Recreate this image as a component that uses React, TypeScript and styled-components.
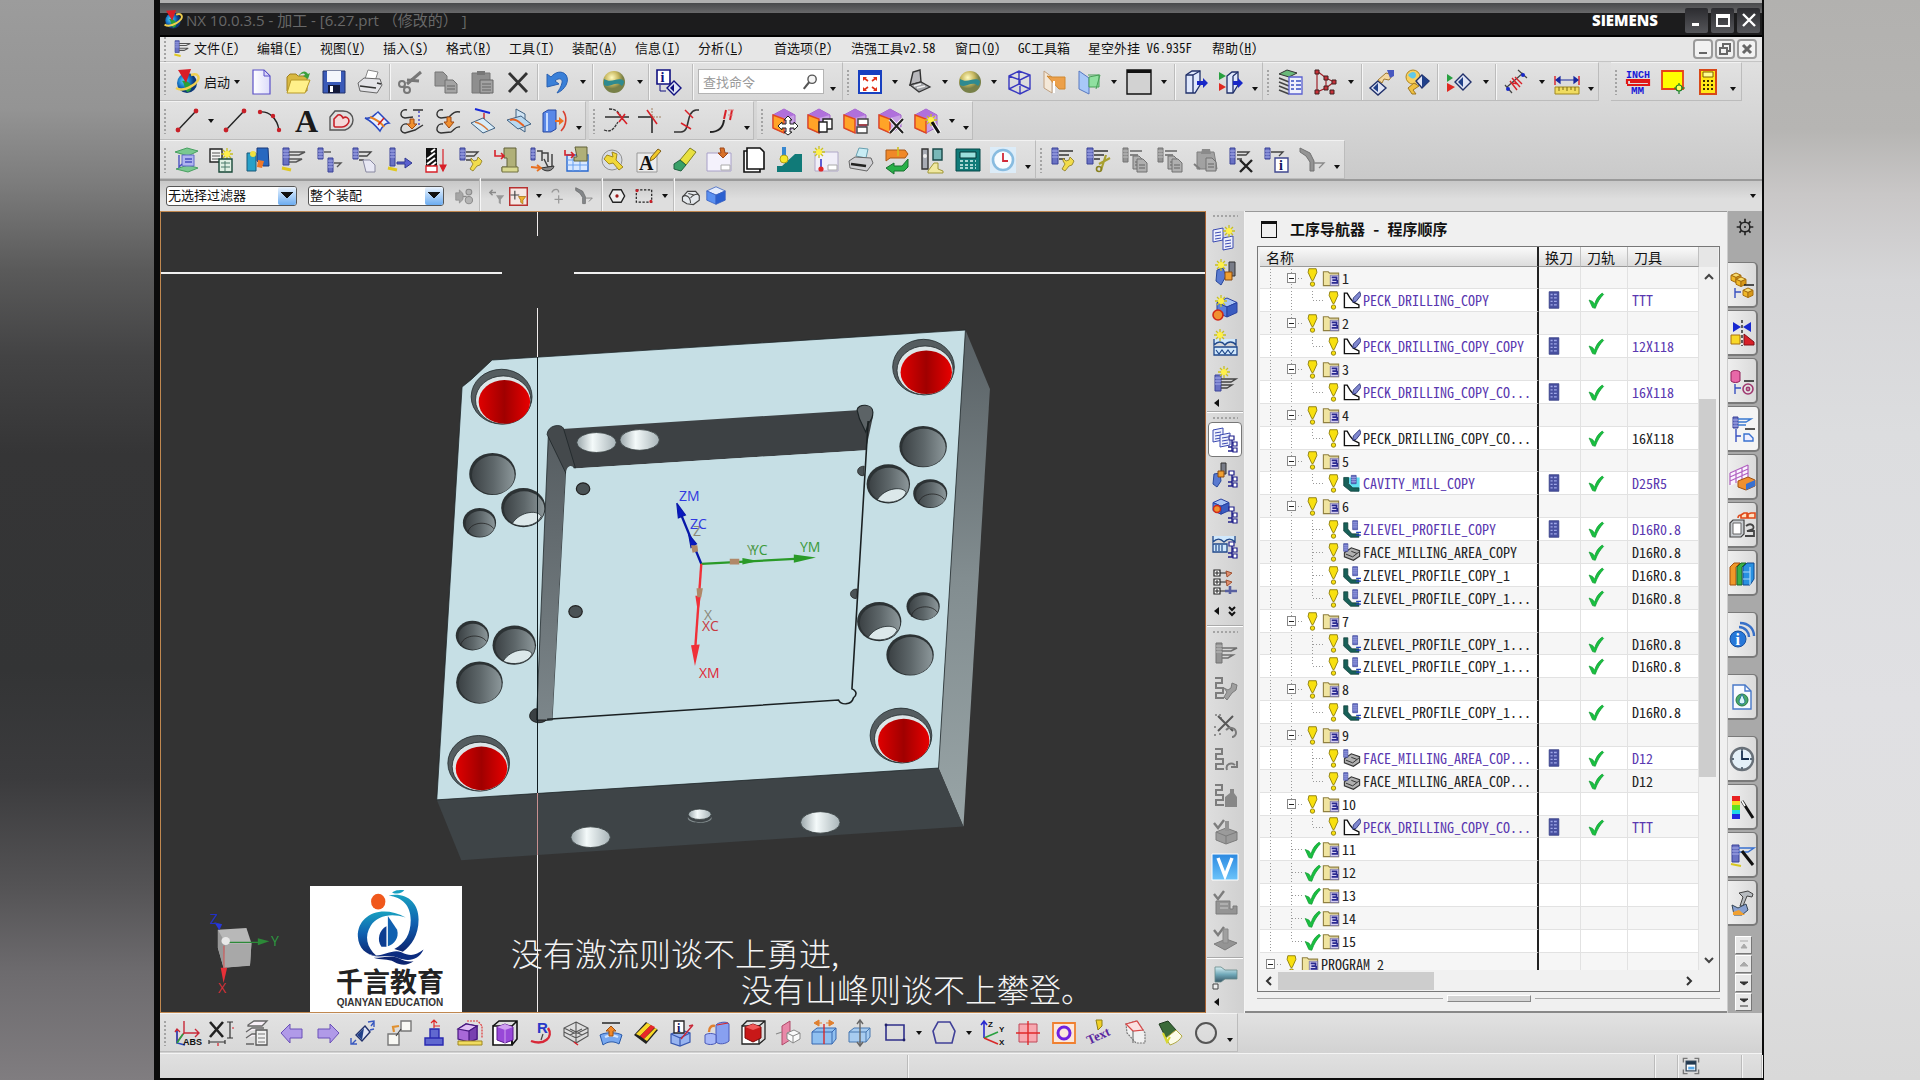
import React from 'react';
import styled, { createGlobalStyle, css } from 'styled-components';

const ui = '"Noto Sans Mono CJK SC", "Noto Sans CJK SC", sans-serif';

const Global = createGlobalStyle`
  * { box-sizing: border-box; }
  html, body { margin: 0; height: 100%; background: #333; }
  body { font: 13px/18px ${ui}; color: #111; overflow: hidden; }
  button, select, input { font: inherit; color: inherit; margin: 0; padding: 0; border: 0; background: none; }
  button svg { overflow: visible; }
`;

/* ---------- icon drawing ---------- */

type Shape = (string | number)[];
const c = (x: number, y: number, r: number) => `M${x - r} ${y}a${r} ${r} 0 1 0 ${2 * r} 0a${r} ${r} 0 1 0 ${-2 * r} 0z`;
const b = (x: number, y: number, w: number, h: number) => `M${x} ${y}h${w}v${h}h${-w}z`;
const star = (x: number, y: number): Shape[] => [
  [`M${x} ${y - 6}v12M${x - 6} ${y}h12M${x - 4} ${y - 4}l8 8M${x + 4} ${y - 4}l-8 8`, 'none', '#c8c020', 1.3],
  [c(x, y, 3), '#fff04a', 'none'],
];
const cube = (x: number, y: number, s: number, top: string, left: string, right: string, line = 'none'): Shape[] => [
  [`M${x} ${y}l${s} ${s * 0.45}l${-s} ${s * 0.45}l${-s} ${-s * 0.45}z`, top, line],
  [`M${x - s} ${y + s * 0.45}l${s} ${s * 0.45}v${s}l${-s} ${-s * 0.45}z`, left, line],
  [`M${x + s} ${y + s * 0.45}l${-s} ${s * 0.45}v${s}l${s} ${-s * 0.45}z`, right, line],
];
const drill = (x: number, y: number, h: number, w = 6): Shape[] => [
  [b(x, y, w, h), '#6a72c4', '#3a4298', 1],
  [`M${x} ${y + 3}h${w}M${x} ${y + 6}h${w}M${x} ${y + 9}h${w}`, 'none', '#a8aeea', 1],
];
const feed = (x: number, y: number): Shape[] => [[`M${x} ${y}h12l-4 4h-8M${x} ${y + 8}h5`, 'none', '#444', 1.3]];
const wrench = (x: number, y: number): Shape[] => [
  [`M${x} ${y}l3 3l3-1l1-3l4 4l-2 4l-3 1l-4 5l-3-2l3-5l-2-3z`, '#f2dc4c', '#8a7a20', 0.8],
];
const cross = (x: number, y: number, s: number): Shape[] => [[`M${x} ${y}l${s} ${s}M${x + s} ${y}l${-s} ${s}`, 'none', '#222', 2]];
const page = (x: number, y: number): Shape[] => [
  [`M${x} ${y}h6l4 4v9h-10z`, '#9c9ca0', '#444', 1],
  [`M${x + 2} ${y + 6}h6M${x + 2} ${y + 9}h6`, 'none', '#333', 1],
];
const nodes: Shape[] = [
  ['M20 13v11M20 16h3M16 20h4M20 24h3M16 24h4', 'none', '#20208a', 1.4],
  [b(17, 9, 5, 4) + b(21, 15, 4, 4) + b(21, 21, 4, 4), '#fff', '#20208a', 1.2],
];
const globe: Shape[] = [[c(13, 13, 11), 'url(#gGlobe)'], ['M3 10c8 5 14-3 20 2c0 2-1 4-2 5c-6-6-12 3-18-1z', '#2e8a90']];
const sheet = (x: number, y: number): Shape[] => [
  [`M${x} ${y}l10-2v12l-10 2z`, '#eef0fc', '#3a4ab0', 1],
  [`M${x + 2} ${y + 3}l6-1M${x + 2} ${y + 6}l6-1M${x + 2} ${y + 9}l6-1`, 'none', '#3a4ab0', 1],
];
const asm = (extra: Shape[]): Shape[] => [
  ['M1 7l11-6l11 6v12l-11 6l-11-5z', '#c8a0e4', '#a060c8', 1],
  ['M1 7l11-6l11 6l-11 3z', '#b070dc'],
  ['M1 7l11 4v14l-11-5z', '#ffa428', '#e04820', 1.4],
  ...extra,
];
const holderA: Shape[] = [['M5 10l6-2l3 8l-5 9l-5-4z', '#5a7ad0', '#28489a', 1], ['M17 2h6v14h-6z', '#787c88', '#333', 1], [b(13, 12, 7, 8), '#f0a030', '#8a4a10', 1]];
const zig: Shape[] = [['M3 2h7v5h-6v5h7v5h-7v5h8', 'none', '#555', 2]];

const icons: Record<string, Shape[]> = {
  nx: [[c(13, 14, 10), 'url(#gSea)'], ['M8 12c3 3 2 7 5 11c4 0 5-4 4-7c-2-3-5-5-9-4z', '#28a03c'], ['M4 1l13-1l-5 14z', '#d81e28'], ['M2 19c8 5 26-6 22-12c-1-2-4-2-7-1', 'none', '#f0d050', 2.4]],
  new: [['M4 1h11l6 6v18h-17z', 'url(#gPaper)', '#5a50c8', 1.2], ['M15 1v6h6z', '#d8d4f8', '#5a50c8']],
  open: [['M2 8l3-3h6l2 2h9v15h-20z', '#d8b840', '#a08020'], ['M6 11h19l-5 13h-18z', '#fff08a', '#b89a28'], ['M14 6c4-5 7-4 9-1l2-1l-2 6l-5-3l2-1c-1-2-3-2-6 1z', '#3ca03c']],
  save: [[b(2, 2, 22, 22), '#3a5ab8', '#20306a'], [b(6, 2, 14, 11), '#f4f6fc'], [b(7, 16, 12, 8), '#141a3a'], [b(9, 17, 3, 6), '#fff']],
  print: [['M8 10l3-9l10 2l-3 9z', '#fff', '#888'], ['M1 14l6-5l16 1l2 6l-5 8l-17-2z', '#e4e4e8', '#666'], ['M3 17l16 2M20 14l4 1', 'none', '#333', 1.6]],
  cut: [['M24 3l-14 12M22 12l-12-1', 'none', '#777', 3], [c(5, 15, 3) + c(10, 21, 3), 'none', '#777', 2]],
  copy: [['M2 3h8l4 4v10h-12z', '#999', '#777'], ['M12 11h8l4 4v9h-12z', '#a4a4a4', '#707070'], ['M14 17h8M14 20h8', 'none', '#666', 1]],
  paste: [[b(3, 4, 18, 20), '#8e8e8e', '#777'], [b(8, 2, 8, 4), '#777'], [b(11, 11, 13, 13), '#a2a2a2', '#666'], ['M13 15h9M13 18h9M13 21h9', 'none', '#666', 1]],
  del: [['M4 4l18 19M22 4l-18 19', 'none', '#333', 2.8]],
  undo: [['M2 5v13l12-3l-4-3c4-4 8-2 7 2s-3 7-5 10c8-3 13-12 9-18c-4-5-11-3-15 2z', '#3a80d8', '#2a60b0']],
  globe,
  info: [[b(1, 1, 13, 14), '#fff', '#101080', 1.6], ['t', 4.5, 13, 14, 'i', '#101080', 700, 'Liberation Serif'], ['M18 12l7 7l-7 7l-7-7z', '#dfe4f4', '#101080', 1.4], ['M18 15v8l-4-4z', '#101080'], ['M4 16v6h6', 'none', '#101080', 1]],
  fit: [[b(2, 2, 22, 22), '#fff', '#1840c0', 2], [b(2, 2, 22, 4), '#1840c0'], ['M7 9l4 3M19 9l-4 3M7 21l4-3M19 21l-4-3', 'none', '#e03018', 1.6], ['M6 8h4l-4 4zM20 8v4l-4-4zM6 22v-4l4 4zM20 22h-4l4-4z', '#e03018']],
  laptop: [['M3 16l3-13l7-2l1 12z', '#b8b8bc', '#333', 1.4], ['M3 16l11-3l9 5l-11 5z', '#a0a2a6', '#333', 1.2], ['M7 17l7-2M10 19l8-2', 'none', '#eee', 1.4]],
  wire: [['M3 7l10-5l11 4v14l-10 5l-11-5zM3 7l11 4l10-5M14 11v14M13 2v13l-10 5M13 15l11 5', 'none', '#3838c0', 1.4]],
  clipA: [['M3 2l8 6v16l-8-5z', '#f4e8d8', '#c0a080'], ['M11 8h13v12h-6l-12-13z', '#eca04a', '#d08830'], ['M13 12v12', 'none', '#fff', 2]],
  clipB: [['M3 2l10 7v16l-10-5z', '#a8c8f8', '#5878c0'], ['M13 8l10-2v12h-10z', '#90e0a0', '#48a058'], ['M12 6l12 0M24 6l-4 14', 'none', '#48a058', 1]],
  pane: [[b(1, 1, 24, 24), '#d2d2d2', '#111', 1.4], [b(1, 1, 24, 3), '#111']],
  outA: [['M3 6l6-4h8v14l-5 8h-9z', '#dfe8fc', '#20306a', 1.3], ['M10 6l7-4M10 6v18M3 6h7', 'none', '#20306a', 1.3], ['M14 12h6v-3l5 5l-5 5v-3h-6z', '#1828c8']],
  outB: [['M9 7l5-4h6v13l-5 8h-6z', '#dfe8fc', '#20306a', 1.3], ['M15 7l5-4M15 7v17', 'none', '#20306a', 1.3], ['M1 3l7 4l-7 4z', '#28a040'], ['M1 14l7 4l-7 4z', '#e02820'], ['M15 12h5v-3l5 5l-5 5v-3h-5z', '#1828c8']],
  layers: [['M2 5l8-4l10 3l-8 4z', '#6ab87a', '#333'], ['M2 9l10 4M2 13l10 4M2 17l10 4M2 21l10 4', 'none', '#444', 1.5], [b(12, 8, 13, 17), '#eef0fc', '#5a60d0', 1.3], ['M14 12h3M14 16h3M14 20h3M19 12h5M19 16h5M19 20h5', 'none', '#3a50c0', 1.6]],
  graph: [['M5 2l9 7l8 4l-8 6l-9 4z M5 2v21M14 9v10', 'none', '#a02028', 1.2], [b(3, 1, 4, 4) + b(12, 7, 4, 4) + b(20, 11, 4, 4) + b(12, 17, 4, 4) + b(3, 21, 4, 4) + b(18, 21, 4, 4), '#c83038', '#402020']],
  pick: [['M9 12l8 7l-8 7l-8-7z', '#dfe4f4', '#20306a', 1.4], ['M9 14v9l-5-4z', '#20408a'], ['M9 11l8-7l7 2l-4 5l-5-1l-2 4z', '#f4d8a0', '#a07830'], ['M18 1h7v6l-4 2z', '#4858c0']],
  man: [[c(9, 8, 7), '#f8d060', '#b08820'], ['M4 6c3-4 8-4 8 0s-5 5-8 0z', '#60c8e8'], ['M10 14l5 3l-6 4l3 4l-4 0l-4-6z', '#f0c040', '#a07820'], ['M18 6l7 6l-7 7l-6-7z', '#dfe4f4', '#20306a', 1.4], ['M18 6l7 6l-7 7z', '#20408a']],
  tri: [['M1 5l6 4l-6 4z', '#28a040'], ['M1 14l8 4l-8 5z', '#e02820'], ['M17 5l8 8l-8 8l-8-8z', '#dfe4f4', '#20306a', 1.4], ['M17 8v10l-5-5z', '#20408a']],
  spring: [['M4 18L20 4M2 16l7 8M15 1l9 8', 'none', '#444', 1.2], ['M7 12l7 9M9 9l8 9M12 8l7 7M10 14l5 1', 'none', '#d82028', 1.4], [c(5, 20, 2) + c(20, 6, 2), '#1828c8']],
  measure: [['M1 7v9M25 7v9', 'none', '#d82028', 1.4], ['M3 11h20M2 11l4-3v6zM24 11l-4-3v6z', '#1828a0', '#1828a0', 1.2], [b(1, 18, 24, 7), '#f0dc60', '#a08820'], ['M5 18v4M9 18v3M13 18v4M17 18v3M21 18v4', 'none', '#7a6a10', 1]],
  inch: [['t', 1, 9, 10, 'INCH', '#1818d8', 700, 'Liberation Mono'], ['M2 15v-4h22v2h-19M24 12v4h-22', 'none', '#e01818', 2.2], ['t', 6, 25, 11, 'MM', '#1818d8', 700, 'Liberation Mono']],
  note: [[b(2, 2, 21, 18), '#ffff00', '#e84018', 1.8], ['M19 14v11M14 19h11', 'none', '#188028', 1.2], [c(19, 19, 3), '#ffff60', '#188028', 1.2]],
  calc: [[b(5, 1, 16, 24), '#ffe818', '#d84818', 2], [b(8, 3, 10, 5), '#ffff90', '#806000'], ['M8 12h10M8 16h10M8 20h10', 'none', '#403000', 2.2, '2 2']],
  line: [['M4 22L22 3', 'none', '#222', 1.4], [c(4, 22, 2.4) + c(22, 3, 2.4), '#c82028']],
  arc: [['M3 4c9-1 17 6 19 18', 'none', '#222', 1.4], [c(3, 4, 2.2) + c(16, 8, 2.2) + c(22, 22, 2.2), '#c82028']],
  A: [['t', 2, 24, 32, 'A', '#1a1a1a', 700, 'Liberation Serif']],
  region: [['M2 21v-12l5-6h8c6 0 10 4 10 9s-4 9-8 10h-15z', 'none', '#555', 1.4], ['M6 18v-7l4-4c3-1 4 1 5 3c3-2 6 0 6 3s-4 6-7 6h-7z', '#f4d8d8', '#c82028', 1.6]],
  patch: [['M1 10c7 1 9-3 13-6l11 11c-4 0-7 4-9 8c-4-5-9-10-15-13z', '#e8f0ff', '#2848c0', 1.5], ['M6 9c5 2 11 5 14 10', 'none', '#e88020', 2], ['M14 17l6-7', 'none', '#d02020', 1.5]],
  proj: [['M8 2c-6-2-9 7-2 8l8-1M14 2h10M8 16c-6-1-9 8-2 9l10-3l8-5', 'none', '#333', 1.4], ['M11 11h4v5h3l-5 5l-5-5h3z', '#f09030', '#a04810'], ['M20 3v14', 'none', '#2828c0', 1.2, '2 2']],
  join: [['M8 2c-6-2-9 7-2 8l8-1c4-4 6-6 11-5M8 16c-6-1-9 8-2 9l10-1c4-3 5-6 9-5', 'none', '#333', 1.4], ['M12 9h4v5h3l-5 6l-5-6h3z', '#f09030', '#a04810']],
  tosurf: [['M5 1l15 4', 'none', '#1828d8', 2], ['M14 5v6', 'none', '#c82028', 1.4], ['M1 15l12-5l12 10l-12 5z', '#d8ecf8', '#406080'], ['M5 14c5 1 9 4 13 8', 'none', '#d87838', 1.6]],
  inter: [['M10 1l9 5v18l-9-6z', '#d0e4f4', '#406080'], ['M1 12l14-4l10 8l-13 5z', '#b8d8f0', '#406080'], ['M4 12c6-2 10 3 14 6', 'none', '#e86020', 2]],
  wrap: [['M2 5l5-3h8v19l-5 3h-8z', '#5a88e8', '#2848a0'], ['M6 5v18', 'none', '#c8dcff', 2], ['M14 13h5', 'none', '#f07020', 2], ['M18 9l5 4l-5 4z', '#f07020'], ['M22 3c4 5 4 14-2 20', 'none', '#d84030', 1.6]],
  trim: [['M2 9h24', 'none', '#222', 1.4], ['M6 1c9 0 11 5 14 12M1 22c8 3 10-2 14-8', 'none', '#333', 1.3, '3 1'], ['M14 4l10 12M22 6l-6 8', 'none', '#d82028', 1.6]],
  corner: [['M1 9h14v16', 'none', '#222', 1.5], ['M15 0v8M16 9h9', 'none', '#a08060', 1, '2 1'], ['M10 2l10 14', 'none', '#d82028', 1.6]],
  scurve: [['M1 24h7c10 0 4-20 15-22h3', 'none', '#333', 1.6], ['M12 2l8 8M8 15l10 6', 'none', '#d82028', 1.5]],
  offset: [['M1 24c9 0 13-4 14-12', 'none', '#222', 2], ['M15 11l2-9M21 12l2-10', 'none', '#d82028', 2], ['M19 2h6M19 7h5', 'none', '#e08080', 1]],
  asmMove: asm([['M16 8l4 4h-2v4h4v-2l4 4l-4 4v-2h-4v4h2l-4 3l-4-3h2v-4h-4v2l-4-4l4-4v2h4v-4h-2z', '#fff', '#222', 1]]),
  asmCopy: asm([['M12 14h8v10h-8zM16 11h9v10h-5v-7h-4z', '#fff', '#222', 1.4]]),
  asmSwap: asm([['M15 11h10v6h-10zM14 19h10v6h-10z', '#fff', '#444', 1.4], ['M16 17l8 0', 'none', '#d82028', 1]]),
  asmDel: asm([['M12 11l13 14M25 11l-13 14', 'none', '#fff', 4], ['M12 11l13 14M25 11l-13 14', 'none', '#222', 2.2]]),
  asmWand: asm([['M18 14l7 11', 'none', '#fff', 5], ...star(17, 12), ['M18 14l7 11', 'none', '#111', 3]]),
  update: [['M1 5l12-4l11 3l-10 5zM2 22l12-4l10 3l-10 4z', '#7ac890', '#48a060'], [b(8, 8, 12, 11), '#b0b4f0', '#6068c8'], ['M5 8v12l3-3M11 12h7M11 15h7', 'none', '#4850c0', 1.4]],
  opNew: [[b(1, 2, 12, 13), '#f4f4f4', '#222', 1.4], ['M3 6h8M3 9h8M3 12h8', 'none', '#555', 1], ...star(18, 7), [b(10, 12, 13, 13), '#e0f0e4', '#184838', 1.4], ['M12 16h9M12 20h9M16 14v10', 'none', '#487868', 1]],
  machine: [['M2 6h9v18h-9z', '#28a0c8', '#185878'], ['M12 1h11l1 18h-6l-6-5z', '#2868c0', '#183878'], [c(8, 7, 3), '#f0e040'], ['M13 13l6 1l-2 7l-5-1z', '#f07828']],
  tool1: [...drill(3, 1, 17), ['M9 5h16l-6 3h-10M9 12h13l-6 3h-7', 'none', '#555', 1.5], ['M2 21l9 2', 'none', '#e0c820', 3]],
  tool2: [...drill(2, 1, 11, 5), ['M8 5h7', 'none', '#555', 1.4], ...drill(12, 11, 14, 5), ['M18 16h7l-4 4', 'none', '#555', 1.4]],
  tool3: [...drill(2, 1, 11, 5), ...feed(8, 5), ['M12 13h7l5 5v7h-9z', '#e8e8f4', '#8888a0']],
  tool4: [...drill(3, 1, 18, 5), ['M1 21l9 2', 'none', '#e0c820', 3], ['M10 15h8v-4l7 5l-7 5v-4h-8z', '#5a60d0', '#303890']],
  bit: [[b(4, 1, 11, 18), '#111'], ['M5 12l8-6M5 17l8-6M9 5l4-3M9 19l5-4', 'none', '#fff', 2], [b(4, 19, 11, 6), '#fff', '#d82028', 1.4], ['M21 2v18M18 18l3 6l3-6z', '#d82028', '#d82028', 1.2]],
  tool5: [...drill(2, 1, 12, 5), ...feed(8, 5), ...wrench(13, 11)],
  mill: [['M11 1h12v18l2 5h-16v-4h5v-9h-3z', '#b0b078', '#606038'], [b(9, 20, 16, 5), '#d8d890', '#707040'], ['M2 3v6h8M8 6l3 3l-3 3', 'none', '#d82028', 1.6]],
  post: [...drill(2, 1, 12, 4), ['M8 4h5v10M13 6h6v9M15 12l4 8h4v-13', 'none', '#444', 1.5], ['M12 21c5 5 12 3 13-2z', '#888', '#333'], ['M2 20l9 1M8 18l4 3l-4 3', 'none', '#e87020', 1.8]],
  sim: [[b(3, 8, 21, 16), '#d8e8ff', '#2868d0', 1.4], ['M3 13h21M3 18h21M9 8v16M16 8v16', 'none', '#68a0f0', 1], ['M11 0h12v14h-13v-4h3z', '#b0b078', '#606038'], ['M1 3v5h8M7 5l3 3l-3 3', 'none', '#d82028', 1.6]],
  gearWrench: [[c(12, 13, 10), '#d8dce4', '#909090'], ['M7 8l-3 4l5 5l4-1l6 7l4-3l-7-7l1-6l-5-2l1 5z', '#f0d838', '#a08820']],
  note2: [[b(2, 6, 20, 19), '#ececec', '#999'], ['t', 4, 23, 20, 'A', '#111', 700, 'Liberation Serif'], ['M16 10l7-8l3 2l-7 8l-4 2z', '#f0c828', '#806018']],
  eraser: [['M9 13L19 1l6 4l-10 13z', '#e8e040', '#808020'], ['M9 13l6 5l-5 6l-7-2l0-5z', '#38a068', '#206040']],
  cardIn: [[b(1, 6, 24, 18), '#f4f2fc', '#a8a0c8'], [b(15, 18, 9, 5), '#fff', '#aaa'], ['M14 1l4 0l1 5l3 0l-5 5l-5-5h3z', '#d87028', '#a04818']],
  pages: [[b(2, 4, 16, 21), '#fff', '#111', 1.6], ['M5 1h13l4 4v17h-17z', '#fff', '#111', 1.6]],
  slope: [['M0 25v-6h5l13-12h7v18z', '#107a78'], [b(5, 0, 4, 9), '#3888d0'], [c(7, 12, 4), '#f8e828', '#b0a018']],
  cardStar: [[b(2, 5, 23, 19), '#f0eef8', '#b0a8c8'], ...star(6, 5), ['M8 12v8', 'none', '#3838c8', 1.6], [c(8, 22, 2.6), '#e02828'], [b(15, 18, 9, 5), '#fff', '#aaa']],
  print2: [['M8 9l3-8l9 1l-2 9z', '#c8ecf4', '#68a0b0'], ['M1 14l6-4l16 1l2 5l-6 8l-17-3z', '#d0d0d4', '#666'], ['M3 17l15 2', 'none', '#222', 2.6]],
  loop: [['M2 3h19l3 4l-3 4h-15l-4 3z', '#f08828', '#a85818'], ['M24 12v8l-4 4h-10v3l-8-6l8-5v3h8z', '#28b048', '#187030'], ['M14 0v9', 'none', '#d0c020', 1.6]],
  flask: [[b(3, 2, 6, 20), '#a8acb4', '#333', 1.4], [c(6, 9, 2), '#eee'], [b(14, 2, 9, 11), '#78b8b8', '#184848', 1.4], ['M9 24l6-8h4v6l5 2v2h-15z', '#f0e8a0', '#a09838']],
  teal: [[b(1, 2, 24, 22), '#107a78', '#064848'], [b(5, 5, 16, 6), '#9ae0dc', '#043838'], ['M5 14h16M5 18h16M5 21h16', 'none', '#d8f4f0', 1.6, '3 2']],
  clock: [[b(0, 0, 26, 26), '#dcecf8'], [c(13, 13, 10), '#f8fcff', '#88bce0', 2.6], ['M13 6v8h5', 'none', '#d02838', 1.8]],
  toolW: [...drill(1, 1, 16, 6), ['M8 4h14M8 8h10M8 12h6', 'none', '#333', 1.4], ...wrench(12, 11)],
  toolC: [...drill(1, 1, 16, 6), ['M8 4h14M8 8h10M8 12h6', 'none', '#333', 1.4], ['M24 11l-11 6M20 8l-5 15', 'none', '#a8a030', 2.2], [c(13, 22, 2.5), 'none', '#888020', 1.6]],
  toolP: [...drill(1, 1, 14, 5), ['M8 4h12M8 8h8', 'none', '#333', 1.4], ...page(11, 9), ...page(15, 12)],
  clip: [['M4 5h17l3 17h-20z', '#888', '#555'], ['M9 2h8l1 5h-10z', '#666'], ...page(13, 11), ['M1 17l6 5', 'none', '#555', 2]],
  toolX: [...drill(2, 1, 16, 5), ['M9 5h12l-3 3h-9M9 12h5', 'none', '#444', 1.3], ['M12 13l12 12M24 13l-12 12', 'none', '#222', 2.4]],
  toolI: [...drill(1, 1, 11, 5), ['M7 5h12l-4 4', 'none', '#444', 1.3], [b(11, 11, 13, 14), '#fff', '#404890', 1.4], ['t', 15, 23, 14, 'i', '#101060', 700, 'Liberation Serif']],
  arm: [['M1 1l10 5l4 8v10h-4v-9l-4-6l-6-4z', '#707478', '#444'], ['M15 16h10l-5 5', 'none', '#666', 1.3]],
  filt: [['M8 4l-4 4l4 4M5 8h8', 'none', '#777', 2], ['M13 12h12l-5 6v7l-3-2v-5z', '#888']],
  redfilt: [[b(1, 1, 24, 24), '#f4e8e4', '#b83030', 2], ['M8 5v12M2 11h12', 'none', '#444', 1.6], ['M13 13h10l-4 5v5l-3-2v-3z', '#f0b030', '#a07010']],
  gcube: [['M1 8h5v-4l5 5v8l-5 5v-4h-5z', '#999', '#777'], [c(19, 7, 4) + c(19, 18, 5), '#aaa', '#777', 1.4], ['M11 13h5', 'none', '#777', 2]],
  mv: [['M4 8c3-6 10-6 10 0M14 12v12M8 18h12', 'none', '#888', 1.8]],
  hexdot: [['M7 4h12l5 9l-5 9h-12l-5-9z', '#eee', '#222', 2], [c(13, 13, 2.4), '#a01818']],
  dash: [[b(3, 5, 20, 16), 'none', '#222', 1.6, '3 2'], [c(4, 6, 2) + c(22, 20, 2), '#c82028']],
  soft: [['M2 14l7-8h11l5 6v6l-8 6l-9-1l-6-4z', '#e4e8ec', '#444', 1.6], ['M2 13c5-3 11 0 11 9M13 15c3-4 6-6 11-5M10 9l8 2', 'none', '#444', 1.4]],
  bluecube: cube(13, 1, 12, '#e4ecfc', '#5a90f0', '#2a60d0', '#3860c0'),
  gNote: [...sheet(1, 5), ...sheet(11, 13), ...star(17, 6)],
  gTool: [...holderA, ...star(9, 5)],
  gGeo: [...cube(15, 2, 10, '#a8c4f4', '#5a80dc', '#3a5cc0', '#2840a0'), [c(6, 19, 5), '#f09030', '#d02818', 1.6], ...star(9, 5)],
  gMethod: [['M2 8v6c4-4 8-4 11 0c3-4 8-4 11 0v-6M2 16h23v8h-23z', '#d0e8fc', '#20488a', 1.3], ['M4 19l3 4l3-4l3 4l3-4l3 4l3-4', 'none', '#20488a', 1.2], ...star(8, 4)],
  gOp: [...drill(3, 8, 16, 6), ['M9 12h15l-5 3h-10M9 18h11l-5 3h-6', 'none', '#444', 1.3], ...star(12, 5)],
  hNote: [...sheet(1, 3), ...sheet(8, 8), ...nodes],
  hTool: [['M2 12l6-1l1 8l-4 6l-4-3z', '#5a7ad0', '#28489a', 1], ['M9 1h5v11h-5z', '#787c88', '#333', 1], [b(6, 9, 6, 6), '#f0a030', '#8a4a10', 1], ...nodes],
  hGeo: [...cube(9, 1, 8, '#a8c4f4', '#5a80dc', '#3a5cc0', '#2840a0'), [c(5, 11, 3.5), '#f09030', '#d02818', 1.4], ...nodes],
  hMethod: [['M1 3v6c4-4 7-4 11 0c4-4 7-4 11 0v-6M1 11h14v8h-14z', '#d0e8fc', '#20488a', 1.3], ['M4 12v6M7 12v6M10 12v6', 'none', '#20488a', 1.2], ...nodes],
  expand: [[b(2, 1, 6, 6) + b(2, 10, 6, 6) + b(2, 19, 6, 6), '#fff', '#222', 1.2], ['M3 4h4M5 2v4M3 13h4M5 11v4M3 22h4M5 20v4M8 4h7M8 13h7M8 22h7', 'none', '#222', 1], ['M14 2l6 2l-5 4zM14 11l6 2l-5 4z', '#e09070', '#a05030'], ['M13 22h12M18 17v8', 'none', '#5860a0', 2.6]],
  dOp: [...drill(4, 2, 20, 6), ['M10 7h15l-6 3h-9M10 14h11l-5 3h-6', 'none', '#444', 1.6]],
  dZigW: [...zig, ['M12 12l4 2l3-2l1-5l5 2l-1 5l-4 3l-5 7l-3-3l3-5z', '#888', '#555']],
  dZigX: [['M3 3h6v6M3 24v-4M3 16v-4M9 22h-4', 'none', '#555', 1.6, '2 2'], ...cross(6, 4, 15), ['M14 18c4-4 10-2 10 3c0 2-2 4-4 4', 'none', '#555', 2]],
  dZigR: [...zig, ['M15 23c-2-6 4-8 8-5M25 14v6h-6', 'none', '#555', 2]],
  dZigB: [...zig, ['M13 14l5-4v-4h4v4l3 4v10h-12z', '#666']],
  dChk: [['M2 5l4 5l6-8', 'none', '#555', 2.4], ['M4 14l10-4l11 4v8l-11 4l-10-4z', '#8a8070', '#555'], ['M4 14l10 4l11-4M14 18v8', 'none', '#555', 1], [b(13, 3, 4, 10), '#777']],
  vbox: [['M0 0h26v26h-26z', 'url(#gBlue)', '#fff', 1], ['M6 4l7 18l7-18', 'none', '#fff', 3.4]],
  dChk2: [['M2 5l4 5l6-8', 'none', '#555', 2.4], ['M4 12h14v8h3v-3h4v8h-21z', '#777', '#555'], ['M8 15h8M8 19h8', 'none', '#aaa', 1.4]],
  dChk3: [['M2 5l4 5l6-8', 'none', '#555', 2.4], ['M2 19l12-5l11 4l-12 7z', '#777', '#555'], [b(11, 4, 5, 14), '#888', '#666']],
  torch: [['M3 3h6l4 3h12v9h-12l-4 3h-6z', 'url(#gTorch)', '#688', 0.8], [b(1, 20, 5, 5), '#eee', '#444', 1]],
  rAsm: [...cube(7, 1, 5, '#f8dc70', '#f0b828', '#d89818', '#a87010'), ...cube(12, 5, 5, '#f8dc70', '#f0b828', '#d89818', '#a87010'), ['M15 13h10', 'none', '#111', 1.4], ['M6 16v10M6 20h6', 'none', '#3850c0', 1.4], ...cube(19, 16, 5, '#f8dc70', '#f0b828', '#d89818', '#a87010')],
  rCon: [['M4 2l8 5l-8 5zM22 2l-8 5l8 5z', '#1828d0'], ['M13 0v26', 'none', '#222', 1.4, '3 2'], [b(2, 15, 9, 9), '#f8d828', '#a87010'], ['M15 14l10 8v3h-10z', '#d82028', '#801018']],
  rPart: [['M2 4v9c2 2 7 2 9 0v-9c-2-2-7-2-9 0z', '#e868a8', '#902058'], ['M15 13h10', 'none', '#111', 1.4], ['M6 16v10M6 20h6', 'none', '#3850c0', 1.4], [c(19, 21, 5) + c(19, 21, 1.6), 'none', '#a03870', 1.6]],
  rOp: [...drill(3, 1, 11, 5), ['M8 3h13l-5 3h-8M8 9h8', 'none', '#3878d0', 1.4], ['M15 13h10', 'none', '#111', 1.4], ['M6 13v13M6 20h5', 'none', '#3850c0', 1.4], ['M14 18h5l4 4v3h-9z', '#eef', '#3870d0', 1.4]],
  rMach: [['M1 9l18-8v12l-18 9z', '#fbf4ff'], ['M1 9l18-8M1 13l18-8M1 17l18-8M1 9v12M7 7v12M13 4v13M19 1v12', 'none', '#b060c0', 1.2], ['M9 17l10-4l7 3v6l-9 4l-8-3z', '#f09030', '#a05010'], ['M17 20l9-4v6l-9 4z', '#3870d0']],
  rRobot: [['M12 3l3-2h3v5h-6zM19 2l3-1h4v5h-7z', '#ffe0c0', '#e04818', 1.6], ['M9 6c0-3 2-3 3-2', 'none', '#e04818', 1.6], ['M1 11l3-3h11v14l-3 3h-11z', '#c8ccd0', '#444', 1.2], [b(4, 11, 8, 11), '#fff', '#666'], ['M17 14c5-4 9 0 7 3l-6 2h7v5h-9', 'none', '#444', 1.8]],
  rBooks: [['M1 7l4-4h6l-4 4v18h-6z', '#f09828', '#a05010'], ['M8 7l4-4h5l-4 4v18h-5z', '#38b048', '#186828'], ['M14 7l4-4h7v16l-4 6h-7z', '#2890e0', '#104890'], ['M14 12h7M14 19h7M21 7v18', 'none', '#a8d8f8', 1.2]],
  rInfo: [[c(9, 17, 8), '#2878d8', '#1850a0'], ['t', 6.5, 23, 16, 'i', '#fff', 700, 'Liberation Serif'], ['M10 5c6 0 10 5 10 10M11 1c9 0 14 6 14 13', 'none', '#3870c8', 2.4]],
  rDoc: [['M4 1h12l6 6v18h-18z', '#f8faff', '#4878c8', 1.4], ['M16 1v6h6', 'none', '#4878c8', 1.4], [c(13, 16, 6), '#48a868', '#287848'], ['M13 10l3 7c0 4-6 4-6 0z', '#d8f4f8', '#287898']],
  rClock: [[c(13, 13, 11), '#e4f0f8', '#687078', 2.4], ['M13 5v8h7', 'none', '#183050', 1.8], ['M13 3v2M13 21v2M3 13h2M21 13h2', 'none', '#345', 1.4]],
  rColor: [[b(3, 2, 8, 5), '#e82020'], [b(3, 7, 8, 4), '#f8d820'], [b(3, 11, 8, 5), '#60e020'], [b(3, 16, 8, 4), '#20d8e8'], [b(3, 20, 8, 5), '#2028e0'], ['M13 7l11 17', 'none', '#111', 3], ['M13 7l3 5', 'none', '#fff', 1.6]],
  rWand: [...drill(3, 3, 17, 7), ['M10 6h15l-6 4h-9', 'none', '#3870d0', 1.4], ['M13 9l11 14', 'none', '#111', 3], ['M2 22l10 2', 'none', '#d8c820', 2]],
  rTools: [['M10 3l9-2l5 3l-1 3l-5-1l-4 10h-3l3-9z', '#b8bcc0', '#444'], ['M3 15l6 3l8-4l2 6l-6 5h-8z', '#88a0d0', '#345'], ['M4 22l6-2l6 5h-12z', '#f0a030']],
  wcs: [['M10 1v12h15M21 9l4 4l-4 4M10 13l-7 9v-12M1 12l2-3l3 3', 'none', '#c82838', 1.4], ['M3 11v12l8 2', 'none', '#2848c0', 1.6], ['M9 14l-6 9', 'none', '#28a040', 1.6], ['t', 9, 25, 9, 'ABS', '#111', 700, 'Liberation Sans']],
  xdim: [['M2 2l13 15M15 2l-13 15', 'none', '#222', 2.6], ['M19 2h6M19 18h6M22 2v16M1 22h16M1 20v4M17 20v4', 'none', '#333', 1.2], ['M10 23v3M24 8h2', 'none', '#d82028', 1.2]],
  stack: [['M4 5l6-4h13l-5 5h-14zM2 12l6-4h12M2 18l6-4h10M2 24h8', '#f8f0f8', '#666', 1.3], [b(12, 10, 11, 15), '#f0f0f0', '#555', 1.3], ['M14 14h7M14 18h7M14 22h7', 'none', '#777', 1]],
  back: [['M2 13l9-9v5h12v9h-12v5z', '#b09ae8', '#6a50b8', 1]],
  fwd: [['M24 13l-9-9v5h-12v9h12v5z', '#b09ae8', '#6a50b8', 1]],
  dia: [['M15 6l5 6l-8 9l-6-6z', '#dfe4f4', '#20306a', 1.4], ['M14 8l-2 12l-5-5z', '#20408a'], ['M18 2l6-1v6M1 18v6h6M21 6l3-4M2 24l4-4M20 10l4-1', 'none', '#3858c0', 1.4]],
  swap: [[b(15, 1, 10, 10) + b(2, 14, 11, 11), '#f8f8f4', '#777', 1.4], ['M13 6l-6 1l1 5', 'none', '#e09030', 2.2], ['M15 9l-5 7', 'none', '#444', 1.2]],
  base: [[b(9, 9, 9, 9) + b(4, 18, 18, 7), '#6068d0', '#2828b0', 1.4], ['M13 8v-8M10 3l3-3l3 3M13 6h6', 'none', '#e02828', 1.2]],
  boxm: [['M1 9l8-5l11 2v13l-8 3l-11-3z', '#a868d8', '#481880', 1.2], ['M1 9l8-5l11 2l-8 5z', '#e0c0f4', '#481880', 1.2], ['M12 11v11l8-3v-13z', '#7840b0', '#481880', 1.2], [b(1, 21, 24, 4), '#f0dc60', '#a08820'], ['M10 1h11l4 5v12', 'none', '#e03838', 1.2, '2 1']],
  bound: [[b(1, 6, 19, 19), '#fff', '#111', 1.6], ['M1 6l6-5h18v18l-5 6M20 6l5-5M20 6v19', 'none', '#111', 1.6], ['M5 7l8-3l8 3v13l-8 3l-8-3z', '#9848d8', '#5a1890', 1], ['M5 7l8-3l8 3l-8 3z', '#d0a0f0'], ['M13 10v13', 'none', '#d0a0f0', 1]],
  radius: [['t', 9, 13, 15, 'R', '#2838c8', 700, 'Liberation Sans'], ['M20 8c6 9-4 18-17 13', 'none', '#d82838', 2.4], ['M15 14l-2 6', 'none', '#444', 1.2]],
  net: [['M13 2l12 6v8l-12 7l-12-7v-8zM1 12l12 6l12-6M7 9l12 6M19 9l-12 6M1 8l12 6l12-6M13 2v21', 'none', '#555', 1.1], ['M11 22l4 3', 'none', '#d82028', 1.4]],
  press: [['M4 2h18v2h-18z', '#555'], ['M2 15c5-3 17-3 22 0l-3 9c-5-3-11-3-16 1z', '#78a8f0', '#2858a8'], ['M7 17c4-2 9-2 13 0', 'none', '#d0e4ff', 2], ['M15 16h-4v-5h-3l5-5l5 5h-3z', '#f08828', '#a05010']],
  stripe: [['M1 15l12-13l12 8l-12 14z', '#222'], ['M3 14l11-11l4 2l-11 11z', '#f8d828'], ['M7 16l11-11l4 2l-11 12z', '#e82828'], ['M11 19l11-11l2 1l-10 12z', '#f8d828']],
  infoCube: [['M2 14l10-4l9 3v9l-10 4l-9-3z', '#98b4f0', '#3858b0', 1.2], ['M2 14l9 4v8M11 18l10-5', 'none', '#3858b0', 1.2], [b(5, 1, 10, 12), '#fff', '#222', 1.3], ['t', 8, 12, 12, 'i', '#101060', 700, 'Liberation Serif'], ['M12 19l12-14M20 6l4-1', 'none', '#c82838', 1.4]],
  cyl: [['M12 5c2-3 12-4 13-1v17c-3 3-10 4-13 1z', '#88a0f0', '#4858b8'], ['M1 15c2-2 9-2 11 0v8c-3 2-8 2-11 0z', '#a8b8f8', '#4858b8'], ['M5 12c0-5 3-7 6-6', 'none', '#e08030', 2.4], ['M13 5l11-2', 'none', '#d82828', 1.2]],
  redcube: [[b(2, 6, 17, 18), '#fff', '#222', 1.3], ['M2 6l5-5h18v18l-6 5M19 6l6-5', 'none', '#222', 1.3], ['M5 7l8-3l8 3v11l-8 4l-8-4z', '#c81818', '#780808', 1], ['M5 7l8-3l8 3l-8 3z', '#f05858']],
  pink: [['M7 6l8-5v19l-8 5z', '#e888a8', '#b04868'], ['M12 13l7-3l6 3v6l-7 4l-6-4z', '#fafafa', '#888'], ['M12 13l6 3v7M18 16l7-3', 'none', '#888', 1], ['M1 14l6-2', 'none', '#888', 1.2]],
  pull: [['M1 12l5-4h19v11l-4 5h-20z', '#90c0f0', '#3868b0'], ['M1 12h20v12M21 12l4-4', 'none', '#3868b0', 1], ['M13 4v20', 'none', '#d82828', 1.4], ['M4 3h7M15 3h7M8 0l-5 3l5 3zM18 0l5 3l-5 3z', '#e08030', '#e08030', 1]],
  split: [['M3 12l5-4h16v9l-4 5h-17z', '#a8ccf0', '#4878b0'], ['M3 12h17v10M20 12l4-4', 'none', '#4878b0', 1], ['M14 0v26M11 4l3-4l3 4M11 22l3 4l3-4', 'none', '#666', 1.4]],
  rect: [[b(4, 5, 18, 15), 'none', '#30308a', 1.6], [c(4, 5, 1.4) + c(22, 20, 1.4), '#20206a']],
  hex: [['M7 2h12l5 9l-3 12h-16l-3-12z', 'none', '#404098', 1.6]],
  xyz: [['M4 18v-16M1 5l3-4l3 4', 'none', '#2828d0', 1.6], ['M4 18l14-6', 'none', '#28a040', 1.6], ['M4 18l14 6', 'none', '#d82828', 1.6], ['t', 8, 7, 8, 'Z', '#111', 700, 'Liberation Sans'], ['t', 19, 12, 8, 'Y', '#111', 700, 'Liberation Sans'], ['t', 19, 25, 8, 'X', '#111', 700, 'Liberation Sans']],
  target: [[b(4, 4, 18, 18), '#f8a8b0', '#c04858'], ['M13 1v24M1 13h24', 'none', '#e02828', 1.4]],
  ob: [[b(2, 3, 22, 20), '#fbe8dc', '#f08030', 1.8], [c(13, 13, 6), 'none', '#7020e0', 3]],
  text: [['t', 2, 24, 13, 'Text', '#5a28a0', 700, 'Liberation Serif', 'rotate(-24 4 22)'], ['M10 0h6v6l-4 4z', '#f0d028', '#908010']],
  rub: [['M4 4l11-3l8 12v10h-9l-9-10z', '#f0f0f0', '#777', 1.2, '2 1'], ['M4 4l11-3l6 9l-10 1z', '#fbe0e0', '#d84848', 1.2], ['M11 11v12', 'none', '#777', 1.2]],
  lamp: [['M2 4l9-3l8 9l-10 8z', '#3a6a38', '#1c3a1c'], ['M9 18l10-8l6 6c-2 4-6 7-12 9z', '#fbfbe8', '#b0a840'], ['M6 13l4 9l3-5', 'none', '#d8d830', 2]],
  ring: [[c(13, 13, 10), 'none', '#555', 2]],
  folder: [['M2 4h7l2 2h13v18h-22z', '#f0e4a0', '#908040', 1.6], [b(12, 9, 12, 15), '#d4ccf0', '#6060a0', 1], ['M14 12h7v4h-6M14 20h8v-4', 'none', '#2a2a90', 2.4]],
  peck: [['M2 3v21h21v-4l-8-4l-5-6l-4-7z', '#fff', '#111', 2], ['M24 1l-9 9l-1 6l5-1l7-9z', '#8088d0', '#333a80', 1.4]],
  cavity: [['M2 5h22v20h-8z', '#60e0f0'], ['M1 5h7v9l6 6h9v5h-12l-10-8z', '#186058', '#0c3834', 1], ...drill(12, 2, 12, 7)],
  zlevel: [['M1 4h6v9l6 7h10v5h-12l-10-9z', '#186058', '#0c3834', 1], ...drill(14, 1, 13, 7), ['M19 18h7M19 22h7', 'none', '#2040c0', 1.8]],
  face: [['M2 14l10-7l12 4v8l-9 6l-13-5z', '#b0b0b0', '#333', 1.6], ['M4 16l10 4l9-7M12 12l8 3', 'none', '#333', 1.4], ...drill(1, 1, 11, 6)],
  bang: [['M8 1h10l1 5l-5 11h-2l-5-11z', '#f8e010', '#8a7a08', 1.2], [c(13, 22, 3), '#f8e010', '#8a7a08', 1.2]],
  check: [['M3 13l5 2l3 4c2-7 5-12 11-16l2 2c-5 5-9 11-12 20l-4-1z', '#18c040', '#109830', 1]],
  chip: [[b(6, 1, 14, 24), '#4850a0', '#303880', 1], ['M8 5h3M13 5h4M8 10h3M13 10h4M8 15h3M13 15h4M8 20h3M13 20h4', 'none', '#a0a8e8', 2]],
  gear: [[c(13, 13, 7), 'none', '#222', 2.2], ['M13 1v5M13 20v5M1 13h5M20 13h5M5 5l3 3M21 5l-3 3M5 21l3-3M21 21l-3-3', 'none', '#222', 2.4], [c(13, 13, 1.4), '#222']],
  mag: [[c(16, 9, 6), '#f4f4f4', '#555', 2], ['M12 13l-8 10', 'none', '#555', 3]],
  frame: [['M2 8v-6h6M18 2h6v6M24 18v6h-6M8 24h-6v-6', 'none', '#777', 2], [b(6, 6, 14, 14), '#fff', '#405060', 2], [b(6, 6, 14, 5), '#203850'], [b(9, 14, 9, 4), '#58a8e8']],
};

const Icon = ({ n, s = 26 }: { n: string; s?: number }) => (
  <svg width={s} height={s} viewBox="0 0 26 26" aria-hidden="true">
    {(icons[n] || []).map((p, i) =>
      p[0] === 't' ? (
        <text key={i} x={p[1]} y={p[2]} fontSize={p[3]} fill={p[5] as string} fontWeight={p[6]} fontFamily={p[7] as string} transform={p[8] as string}>{p[4]}</text>
      ) : (
        <path key={i} d={p[0] as string} fill={p[1] as string} stroke={(p[2] as string) || 'none'} strokeWidth={p[3] ?? 1} strokeDasharray={p[4] as string} />
      )
    )}
  </svg>
);

/* ---------- shell ---------- */

const Page = styled.div`display: grid; grid-template-columns: 154fr 1610fr 156fr; height: 100vh;`;
const LeftBackdrop = styled.div`
  background: linear-gradient(#9c9c9c 0, #949494 10%, #7c7c7c 17%, #5a5a5a 25%, #434344 33%, #353536 42%, #333435 62%, #3b3b3d 72%, #545355 82%, #6d6b6e 90%, #807d80 100%);
`;
const RightBackdrop = styled.div`
  background: linear-gradient(#b2b1af 0, #b6b5b3 12%, #c9c7c7 18%, #d6d6d8 26%, #dcdddf 40%, #e0e0e3 65%, #dfdfe0 82%, #d9d9d9 100%);
`;
const Window = styled.main`
  display: flex; flex-direction: column; min-width: 0; min-height: 0;
  border: solid #0b0b0b; border-width: 0 2px 2px 6px; background: #dcdcdc;
`;
const TitleBar = styled.header`
  height: 37px; display: flex; align-items: center; padding: 3px 2px 0 3px; gap: 3px; flex: none;
  background: linear-gradient(#b0b0b0 0 3px, #48494b 3px, #68686a 13px, #1c1c1d 13px, #1c1c1d 35px, #000 35px);
`;
const AppTitle = styled.h1`margin: 0; flex: 1; font: 400 15px/20px "Open Sans", "Noto Sans CJK SC", sans-serif; color: #686868;`;
const Brand = styled.span`font: 800 15px/20px "Open Sans", "Noto Sans", sans-serif; color: #fff; margin-right: 24px;`;
const CaptionButton = styled.button`
  width: 23px; height: 25px; display: grid; place-items: center; border-radius: 2px;
  background: linear-gradient(#2c2c30, #55565a);
`;
const MenuBar = styled.nav`
  height: 25px; flex: none; display: flex; align-items: center; background: #e6e6e6; padding: 0 5px 0 3px;
  border-bottom: 1px solid #c4c4c4;
`;
const Menu = styled.button<{ $w: number }>`width: ${p => p.$w}px; height: 22px; padding-bottom: 3px; text-align: left; white-space: nowrap; color: #111;`;
const MdiButton = styled.button`
  width: 20px; height: 20px; margin-left: 2px; display: grid; place-items: center;
  border: 2px solid #9a9a9a; border-radius: 4px; background: #f2f2f2;
`;
const Spacer = styled.div`flex: 1;`;

const Toolbars = styled.div`flex: none; background: linear-gradient(#e0e0e0, #cfcfcf 75%, #cacaca); border-bottom: 2px solid #9a9a9a;`;
const Row = styled.div`display: flex; height: 39px;`;
const Group = styled.div<{ $ml?: number }>`
  display: flex; align-items: center; height: 39px; padding-left: 3px; margin-left: ${p => p.$ml ?? 0}px;
  border: solid; border-width: 1px 1px 1px 0; border-color: #f2f2f2 #bcbcbc #bcbcbc;
  background: linear-gradient(#e2e2e2, #d8d8d8);
`;
const Grip = styled.span<{ $row?: boolean }>`
  flex: none; width: 4px; height: 26px; margin-right: 3px;
  background: radial-gradient(circle at 2px 2px, #a4a4a4 1px, transparent 1px) 0 0 / 4px 4px;
  ${p => p.$row && css`width: 26px; height: 4px; margin: 3px 0 2px;`}
`;
const Tool = styled.button<{ $w?: number; $off?: boolean }>`
  flex: none; width: ${p => p.$w ?? 35}px; height: 34px; display: flex; align-items: center; justify-content: center; gap: 4px;
  ${p => !p.$w && css`&:nth-of-type(2n) { width: 36px; }`}
  svg { ${p => p.$off && css`filter: grayscale(1) opacity(0.7);`} }
`;
const CaretButton = styled.button<{ $w: number; $low?: boolean }>`
  flex: none; width: ${p => p.$w}px; height: 34px; display: grid; place-items: center; padding-top: ${p => (p.$low ? 14 : 0)}px;
`;
const Tri = styled.i<{ $dir?: 'left' }>`
  width: 0; height: 0; border: 3px solid transparent; border-top: 4px solid #111; border-bottom-width: 0;
  ${p => p.$dir === 'left' && css`border: 4px solid transparent; border-right: 5px solid #111; border-left-width: 0;`}
`;
const Sep = styled.span<{ $w: number }>`
  flex: none; width: ${p => p.$w}px; height: 36px;
  background: linear-gradient(90deg, #bcbcbc 1px, #f6f6f6 1px 2px, transparent 2px) center / 2px 100% no-repeat;
`;
const SearchBox = styled.label`
  display: flex; align-items: center; width: 126px; height: 25px; padding: 0 4px; background: #fff; border: 1px solid #b4b4b4;
  input { flex: 1; min-width: 0; outline: 0; } input::placeholder { color: #9a9a9a; opacity: 1; }
`;

type Item = string | [string, number];
const Items = ({ list }: { list: Item[] }) => (
  <>
    {list.map((it, i) => {
      const [n, w] = typeof it === 'string' ? [it, undefined] : it;
      if (n === '|') return <Sep key={i} $w={w ?? 5} />;
      if (n === 'v' || n === 'V') return <CaretButton key={i} $w={w ?? 14} $low={n === 'V'} aria-label="更多"><Tri /></CaretButton>;
      if (n === 'start') return <Tool key={i} $w={74}><Icon n="nx" /><span>启动</span><Tri /></Tool>;
      if (n === 'search')
        return <SearchBox key={i}><input placeholder="查找命令" aria-label="查找命令" /><Icon n="mag" s={18} /></SearchBox>;
      const off = n[0] === '-';
      return <Tool key={i} $w={w} $off={off} aria-label={n}><Icon n={off ? n.slice(1) : n} /></Tool>;
    })}
  </>
);
const Bar = ({ list, ml }: { list: Item[]; ml?: number }) => <Group $ml={ml}><Grip /><Items list={list} /></Group>;

const menus: [string, string, number][] = [
  ['文件', 'F', 63], ['编辑', 'E', 63], ['视图', 'V', 63], ['插入', 'S', 63], ['格式', 'R', 63], ['工具', 'T', 63],
  ['装配', 'A', 63], ['信息', 'I', 63], ['分析', 'L', 76], ['首选项', 'P', 77], ['浩强工具v2.58', '', 104], ['窗口', 'O', 63],
  ['GC工具箱', '', 70], ['星空外挂 V6.935F', '', 124], ['帮助', 'H', 63],
];

const row1a: Item[] = ['start', ['new', 36], ['open', 36], ['save', 36], ['print', 36], ['|', 4], ['cut', 36], ['copy', 36], ['paste', 36], ['del', 36], ['|', 3], ['undo', 37], 'v', '|', ['globe', 38], 'v', ['|', 4], ['info', 36], ['|', 11], 'search', ['V', 18]];
const row1b: Item[] = [['fit', 33], ['v', 18], ['laptop', 32], ['v', 18], ['globe', 32], ['v', 16], ['wire', 34], ['clipA', 36], ['clipB', 34], ['v', 16], ['pane', 34], ['v', 16], ['|', 6], ['outA', 35], ['outB', 35], ['V', 14]];
const row1c: Item[] = [['layers', 34], ['graph', 36], ['v', 16], ['|', 6], ['pick', 34], ['man', 36], ['|', 6], ['tri', 36], ['v', 17], ['|', 4], ['spring', 36], ['v', 16], ['measure', 34], ['V', 14]];
const row2a: Item[] = [['line', 33], ['v', 15], ['line', 34], 'arc', 'A', 'region', 'patch', 'proj', 'join', 'tosurf', 'inter', 'wrap', ['V', 13]];
const row2b: Item[] = [['trim', 33], ['corner', 36], ['scurve', 36], ['offset', 36], ['V', 13]];
const row2c: Item[] = [['asmMove', 35], 'asmCopy', 'asmSwap', 'asmDel', 'asmWand', ['v', 16], ['V', 12]];
const row3a: Item[] = [['update', 34], 'opNew', 'machine', 'tool1', 'tool2', 'tool3', 'tool4', 'bit', 'tool5', 'mill', 'post', 'sim', 'gearWrench', 'note2', 'eraser', 'cardIn', 'pages', 'slope', 'cardStar', 'print2', 'loop', 'flask', 'teal', 'clock', ['V', 14]];
const row3b: Item[] = ['toolW', 'toolC', '-toolP', '-toolP', '-clip', 'toolX', 'toolI', '-arm', ['V', 14]];
const bottom: Item[] = [['wcs', 33], 'xdim', 'stack', 'back', 'fwd', 'dia', 'swap', 'base', 'boxm', 'bound', 'radius', 'net', ['press', 34], 'stripe', 'infoCube', 'cyl', 'redcube', 'pink', 'pull', 'split', 'rect', ['v', 14], ['hex', 35], ['v', 15], ['xyz', 34], 'target', 'ob', 'text', 'rub', 'lamp', 'ring', ['V', 14]];

/* ---------- selection bar ---------- */

const SelectionBar = styled.div`
  height: 30px; flex: none; display: flex; align-items: center; padding: 0 4px 0 6px; background: linear-gradient(#c8c8c8, #dedede 60%);
`;
const Drop = styled.label<{ $w: number }>`
  position: relative; width: ${p => p.$w}px; height: 20px; margin-right: 11px; flex: none;
  select { width: 100%; height: 20px; appearance: none; background: #fff; border: 1px solid #555; border-radius: 3px; padding: 0 20px 2px 1px; font-size: 13px; line-height: 16px; }
  &::after {
    content: ''; position: absolute; right: 1px; top: 1px; width: 18px; height: 18px; border-radius: 2px; pointer-events: none;
    background: conic-gradient(from 315deg at 50% 72%, #111 90deg, transparent 0) center 5px / 12px 9px no-repeat, linear-gradient(#eaf4ff, #6cacf0);
  }
`;
const Mini = styled.button<{ $w: number; $off?: boolean }>`
  width: ${p => p.$w}px; height: 24px; flex: none; display: grid; place-items: center;
  svg { ${p => p.$off && css`opacity: 0.8;`} }
`;

/* ---------- workspace ---------- */

const Work = styled.div`flex: 1; min-height: 0; display: flex; background: #e4e4e4;`;
const Viewport = styled.section`
  position: relative; flex: 1; min-width: 0; border: 1px solid #c08850; border-right-color: #a86030; background: #333; overflow: hidden;
`;
const Scene = styled.svg`position: absolute; inset: 0; display: block;`;
const LogoCard = styled.figure`
  position: absolute; left: 149px; bottom: 0; width: 152px; height: 126px; margin: 0; padding: 2px 0 0 8px; background: #fff;
  display: flex; flex-direction: column; align-items: center;
`;
const LogoName = styled.strong`font: 700 27px/30px "Noto Sans CJK SC", sans-serif; color: #222;`;
const LogoSub = styled.span`font: 700 10px/14px "Liberation Sans", sans-serif; color: #333; white-space: nowrap;`;
const Verse = styled.p<{ $x: number; $b: number }>`
  position: absolute; left: ${p => p.$x}px; bottom: ${p => p.$b}px; margin: 0; white-space: nowrap;
  font: 300 32px/36px "Noto Sans CJK SC", sans-serif; color: #f4f4f4;
`;

type Hole = [number, number, number, number];
const blind: Hole[] = [[234, 473, 59, 57], [201, 605, 42, 40], [183, 910, 42, 40], [201, 1037, 59, 57], [1323, 399, 60, 56], [1341, 526, 43, 39], [1323, 831, 42, 38], [1290, 962, 60, 56]];
const through: Hole[] = [[312, 564, 56, 53], [289, 936, 55, 53], [1235, 500, 55, 53], [1212, 872, 56, 53]];
const red: Hole[] = [[257, 264, 77, 74], [1324, 184, 78, 75], [1267, 1180, 78, 74], [199, 1255, 78, 75]];
const shiny: Hole[] = [[497, 388, 50, 27], [606, 381, 50, 28], [482, 1455, 50, 28], [1063, 1415, 50, 29], [758, 1393, 29, 14]];

const Model = () => (
  <g transform="translate(400 300) scale(0.3954 0.3699)">
    <path d="M1430 84L1492 243L1425 1426L1362 1268z" fill="url(#gSide)" />
    <path d="M93 1354L1362 1268L1425 1426L155 1517z" fill="#3e4447" />
    <path d="M233 165L1430 84L1362 1268L93 1354L157 238L180 218z" fill="#c6dfe5" stroke="#1c2426" strokeWidth="2" />
    <path d="M400 352L1165 300L1196 318L1178 409L440 458L420 462L375 372z" fill="#3d4144" />
    <path d="M375 372L440 458L420 470L386 1138L345 1142z" fill="url(#gWall)" stroke="#1c2426" strokeWidth="2" />
    <path d="M372 366c2-28 40-30 42-14l30 106c-14-10-22-6-24 14z" fill="#44494c" stroke="#1c2426" strokeWidth="2" />
    <path d="M1156 300c2-18 40-18 40 6c0 12-4 22-12 30l-6 24l-16-36z" fill="#5c6366" stroke="#1c2426" strokeWidth="3" />
    <path d="M440 458L1178 409L1143 1050c16 10 10 24 2 26c-4 24-32 20-36 8L370 1137l16-1L420 470c0-20 16-24 20-12z" fill="#c6dfe5" />
    <path d="M1184 330L1143 1054c14 6 12 18 4 24c-6 22-32 20-38 6L372 1136" fill="none" stroke="#1a2022" strokeWidth="4" />
    <path d="M328 1124c4-14 14-18 18-16v30h24c-10 14-46 8-42-14z" fill="#3a4043" stroke="#111" strokeWidth="2" />
    {blind.map(([x, y, rx, ry], i) => (
      <g key={i}>
        <ellipse cx={x} cy={y} rx={rx} ry={ry} fill="#2c3234" />
        <ellipse cx={x + 2} cy={y + 3} rx={rx - 5} ry={ry - 5} fill="url(#gHole)" />
        {rx < 50 && <path d={`M${x - 30} ${y + 28}c4-30 50-36 66-12`} fill="none" stroke="#222" strokeWidth="2" />}
      </g>
    ))}
    {through.map(([x, y, rx, ry], i) => (
      <g key={i}>
        <ellipse cx={x} cy={y} rx={rx} ry={ry} fill="#2c3234" />
        <ellipse cx={x + 2} cy={y + 3} rx={rx - 5} ry={ry - 6} fill="url(#gHole)" />
        <path d={`M${x - 28} ${y + 43}C${x - 8} ${y + 8} ${x + 40} ${y + 6} ${x + 45} ${y + 24}C${x + 34} ${y + 50} ${x - 4} ${y + 56} ${x - 28} ${y + 43}z`} fill="#dce8ea" stroke="#1c2426" strokeWidth="2" />
      </g>
    ))}
    {red.map(([x, y, rx, ry], i) => (
      <g key={i}>
        <ellipse cx={x} cy={y} rx={rx} ry={ry} fill="#555d60" stroke="#1c2426" strokeWidth="2" />
        <ellipse cx={x + 4} cy={y + 9} rx={rx - 7} ry={ry - 9} fill="#dce6e8" stroke="#1c2426" strokeWidth="2" />
        <ellipse cx={x + 7} cy={y + 14} rx="65" ry="59" fill="url(#gRed)" />
      </g>
    ))}
    {shiny.map(([x, y, rx, ry], i) => (
      <ellipse key={i} cx={x} cy={y} rx={rx} ry={ry} fill="url(#gShine)" stroke="#30383a" strokeWidth="2" />
    ))}
    <path d="M728 1400c6 18 54 20 60 0v6c-8 14-52 14-60 0z" fill="#808a8c" />
    {[[463, 513], [444, 845]].map(([x, y]) => <ellipse key={y} cx={x} cy={y} rx="17" ry="16" fill="#4a5255" stroke="#222" strokeWidth="3" />)}
    <path d="M1174 452c-22 0-22 26-2 26zM1156 784c-22 0-22 26-2 26z" fill="#4a5255" stroke="#222" strokeWidth="2" />

    <path d="M762 716L706 570" stroke="#0818a8" strokeWidth="6" />
    <path d="M700 552l22 32l-18 8zM730 636l20 26l-14 10z" fill="#0818c0" stroke="#0818a8" strokeWidth="3" />
    <path d="M762 716L1010 702" stroke="#2a9a28" strokeWidth="6" />
    <path d="M1052 699l-56-8v22zM906 708l-40-8v18z" fill="#2a9a28" />
    <path d="M762 716L747 940" stroke="#f03038" strokeWidth="6" />
    <path d="M746 992l-10-56l22-2zM754 852l-7-50h14z" fill="#f03038" />
    <path d="M736 666h16l2 16l-14 4zM834 702h24v16h-24zM750 782h16l-4 24h-10z" fill="#b08868" />
  </g>
);

const TriadAndLines = () => (
  <>
    <g transform="translate(150 860) scale(0.3571 0.3333)">
      <path d="M190 212l80-5l14 46l-4 66l-74 7l-16-60z" fill="#b8b8b8" />
      <path d="M190 212l22 42l-6 72l-16-60z" fill="#989898" />
      <path d="M212 254h72l-4 66l-74 6z" fill="#a8a8a8" />
      <path d="M180 190l22 6l-8 18z" fill="#2838d8" />
      <path d="M212 248h90v-10l32 9l-32 12v-7h-90z" fill="#2c8a38" />
      <path d="M207 260v66" stroke="#c86868" strokeWidth="4" />
      <path d="M198 326h18l-10 46z" fill="#e83038" />
      <circle cx="212" cy="246" r="12" fill="#e8e8e8" />
    </g>
    <g fontFamily="Open Sans, sans-serif" fontSize="14">
      <text x="210" y="925" fill="#2030c8">Z</text>
      <text x="271" y="947" fill="#2c9a40">Y</text>
      <text x="218" y="994" fill="#d83038">X</text>
      <text x="679" y="502" fill="#3038e0">ZM</text>
      <text x="693" y="537" fill="#8a8878">Z</text>
      <text x="690" y="530" fill="#3038e0">ZC</text>
      <text x="747" y="556" fill="#6a9a58">Y</text>
      <text x="751" y="556" fill="#3a9a3a">YC</text>
      <text x="800" y="553" fill="#3a9a3a">YM</text>
      <text x="704" y="621" fill="#8a8878">X</text>
      <text x="702" y="632" fill="#c83840">XC</text>
      <text x="699" y="679" fill="#e02838">XM</text>
    </g>
    <g shapeRendering="crispEdges">
      <path d="M161 274H502M574 274H1400" stroke="#f0f0f0" strokeWidth="2" />
      <path d="M537.5 213V237M537.5 309V358M537.5 856V1013" stroke="#f0ecec" />
      <path d="M537.5 794V856" stroke="#c89090" />
      <path d="M537.5 358V794" stroke="#101c20" />
    </g>
  </>
);

const Defs = () => (
  <defs>
    <linearGradient id="gSide" x2="0" y2="1"><stop stopColor="#586064" /><stop offset="0.5" stopColor="#828d90" /><stop offset="1" stopColor="#98a4a6" /></linearGradient>
    <linearGradient id="gWall" x2="0" y2="1"><stop stopColor="#565d61" /><stop offset="1" stopColor="#7c868a" /></linearGradient>
    <linearGradient id="gHole"><stop stopColor="#3c4245" /><stop offset="0.5" stopColor="#5e676a" /><stop offset="1" stopColor="#8c979a" /></linearGradient>
    <linearGradient id="gRed"><stop stopColor="#e00000" /><stop offset="0.5" stopColor="#a00000" /><stop offset="1" stopColor="#e80000" /></linearGradient>
    <linearGradient id="gShine"><stop stopColor="#9aa6aa" /><stop offset="0.4" stopColor="#f4fafa" /><stop offset="1" stopColor="#a8b4b8" /></linearGradient>
    <linearGradient id="gPaper"><stop stopColor="#fff" /><stop offset="1" stopColor="#dcdcfa" /></linearGradient>
    <linearGradient id="gBlue" x2="0" y2="1"><stop stopColor="#2a88e0" /><stop offset="1" stopColor="#6cc4fa" /></linearGradient>
    <linearGradient id="gTorch" x2="0" y2="1"><stop stopColor="#d8f0f4" /><stop offset="0.5" stopColor="#70a8b8" /><stop offset="1" stopColor="#385868" /></linearGradient>
    <radialGradient id="gGlobe" cx="0.4" cy="0.3"><stop stopColor="#fffbc0" /><stop offset="0.6" stopColor="#c8b860" /><stop offset="1" stopColor="#788048" /></radialGradient>
    <radialGradient id="gSea" cx="0.35" cy="0.4"><stop stopColor="#58d8f8" /><stop offset="0.6" stopColor="#1878c8" /><stop offset="1" stopColor="#0c3878" /></radialGradient>
    <linearGradient id="gQ" x2="0" y2="1"><stop stopColor="#18a0c0" /><stop offset="0.5" stopColor="#1060b0" /><stop offset="1" stopColor="#0c2470" /></linearGradient>
  </defs>
);

const QLogo = () => (
  <svg width="70" height="78" viewBox="570 84 196 228" preserveAspectRatio="none" aria-hidden="true">
    <ellipse cx="635" cy="124" rx="20" ry="23" fill="#f0581c" />
    <path d="M664 106c50-10 84 20 84 70c0 46-20 76-44 94l-24-8c30-16 46-44 46-84c0-44-24-66-62-72z" fill="url(#gQ)" />
    <path d="M674 98c8-8 16-8 34-8c-6 8-16 14-34 8z" fill="#18a0c0" />
    <path d="M712 170c-70-40-136-6-134 56c2 34 22 54 52 56c-28-26-34-58-16-88c18-28 54-38 98-24z" fill="url(#gQ)" />
    <path d="M662 166l26 40c6 24-8 42-26 48z" fill="#1060b0" /><path d="M658 196c-20 10-28 40-14 60h14z" fill="#0c3c90" />
    <path d="M600 272c40 26 70-14 100 0c24 12 40 10 62-8c-14 32-44 36-72 24c-34-14-60 8-90-16z" fill="#0c2c80" />
    <path d="M622 288c30 0 50-10 72 2c14 8 24 10 40 8c-18 14-36 12-54 2c-18-10-38-4-58-12z" fill="#0c2470" />
  </svg>
);

/* ---------- vertical toolbar ---------- */

const SideBar = styled.aside`
  width: 39px; flex: none; display: flex; flex-direction: column; align-items: center; background: linear-gradient(90deg, #dedede, #d0d0d0); border-right: 1px solid #f4f4f4; overflow: hidden;
`;
const SideTool = styled.button<{ $on?: boolean; $off?: boolean }>`
  flex: none; width: 34px; height: 35px; display: grid; place-items: center; border-radius: 4px;
  &:nth-of-type(2n) { height: 36px; }
  ${p => p.$on && css`background: #fff; border: 1px solid #777;`}
  svg { ${p => p.$off && css`filter: grayscale(1) opacity(0.7);`} }
`;
const SideArrow = styled.button<{ $h: number }>`width: 34px; height: ${p => p.$h}px; flex: none; display: flex; align-items: center; justify-content: space-between; padding: 0 6px;`;
const Rule = styled.hr`width: 36px; flex: none; margin: 2px 0 0; border: 0; border-top: 1px solid #aaa; border-bottom: 1px solid #fff;`;

/* ---------- navigator ---------- */

const Navigator = styled.section`
  width: 482px; flex: none; display: flex; flex-direction: column; background: #f0f0f0; border-top: 1px solid #999; border-bottom: 2px solid #888; padding: 0 7px 0 12px;
`;
const NavTitle = styled.h2`
  height: 34px; flex: none; margin: 0; padding-left: 4px; display: flex; align-items: center; gap: 13px; font: 700 15px/20px ${ui}; color: #111;
  &::before { content: ''; width: 14px; height: 13px; border: 1px solid #111; border-top-width: 3px; }
`;
const TreeBox = styled.div`
  flex: 1; min-height: 0; display: grid; grid-template: minmax(0, 1fr) 21px / minmax(0, 1fr) 19px; border: 1px solid #777; padding: 0 1px 0 2px;
`;
const Clip = styled.div`overflow: hidden; background: #fff; min-width: 0;`;
const Tree = styled.table`
  width: 100%; border-collapse: separate; border-spacing: 0; table-layout: fixed; font-size: 14px; line-height: 16px;
  th { height: 20px; padding: 0 0 0 6px; font-weight: 400; text-align: left; background: linear-gradient(#fafafa, #dcdcdc); border-right: 1px solid #c0c0c0; border-bottom: 1px solid #999; }
  td { padding: 0; height: 23px; border-right: 1px solid #e2e2e2; border-bottom: 1px solid #e2e2e2; white-space: nowrap; overflow: hidden; vertical-align: middle; }
  th:first-child, td:first-child { border-right: 2px solid #222; }
  tbody tr:nth-child(odd) { background: #f6f6f6; }
  tbody tr:nth-child(8n + 1) td { height: 22px; }
`;
const Col = styled.col<{ $w?: number }>`${p => p.$w && css`width: ${p.$w}px;`}`;
const NodeRow = styled.div`display: flex; align-items: center; height: 20px; svg { flex: none; margin: -2px 0; }`;
const Label = styled.span<{ $hot?: boolean }>`margin-left: 2px; color: ${p => (p.$hot ? '#5a38b0' : '#222')};`;
const ToolCell = styled.td`&&& { padding-left: 2px; }`;
const MarkCell = styled.td`svg { display: block; margin-left: 6px; }`;
const Slot = styled.span`flex: none; width: 20px; display: grid; place-items: center;`;

const Guide = ({ kind }: { kind: 'pass' | 'tee' | 'end' | 'minus' | 'first' }) => (
  <svg width="21" height="24" viewBox="0 0 21 24" aria-hidden="true" shapeRendering="crispEdges">
    {kind !== 'first' && <path d={kind === 'end' ? 'M10.5 0V12' : 'M10.5 0V24'} stroke="#999" strokeDasharray="1 2" />}
    {kind !== 'pass' && <path d="M11 12.5H21" stroke="#999" strokeDasharray="1 2" />}
    {(kind === 'minus' || kind === 'first') && <><rect x="6.5" y="7.5" width="8" height="9" rx="1" fill="#fff" stroke="#888" /><path d="M8 12.5h5" stroke="#222" /></>}
  </svg>
);

type Node = { t: string; k?: string; hot?: boolean; tool?: string; end?: boolean; done?: boolean; root?: boolean };
const g = (t: string): Node => ({ t });
const o = (k: string, t: string, tool: string, hot = false, end = false): Node => ({ k, t, tool, hot, end });
const tree: Node[] = [
  g('1'), o('peck', 'PECK_DRILLING_COPY', 'TTT', true, true),
  g('2'), o('peck', 'PECK_DRILLING_COPY_COPY', '12X118', true, true),
  g('3'), o('peck', 'PECK_DRILLING_COPY_CO...', '16X118', true, true),
  g('4'), o('peck', 'PECK_DRILLING_COPY_CO...', '16X118', false, true),
  g('5'), o('cavity', 'CAVITY_MILL_COPY', 'D25R5', true, true),
  g('6'), o('zlevel', 'ZLEVEL_PROFILE_COPY', 'D16R0.8', true), o('face', 'FACE_MILLING_AREA_COPY', 'D16R0.8'),
  o('zlevel', 'ZLEVEL_PROFILE_COPY_1', 'D16R0.8'), o('zlevel', 'ZLEVEL_PROFILE_COPY_1...', 'D16R0.8', false, true),
  g('7'), o('zlevel', 'ZLEVEL_PROFILE_COPY_1...', 'D16R0.8'), o('zlevel', 'ZLEVEL_PROFILE_COPY_1...', 'D16R0.8', false, true),
  g('8'), o('zlevel', 'ZLEVEL_PROFILE_COPY_1...', 'D16R0.8', false, true),
  g('9'), o('face', 'FACE_MILLING_AREA_COP...', 'D12', true), o('face', 'FACE_MILLING_AREA_COP...', 'D12', false, true),
  g('10'), o('peck', 'PECK_DRILLING_COPY_CO...', 'TTT', true, true),
  { t: '11', done: true }, { t: '12', done: true }, { t: '13', done: true }, { t: '14', done: true }, { t: '15', done: true, end: true },
  { t: 'PROGRAM 2', root: true },
];

const TreeRow = ({ n }: { n: Node }) => (
  <tr>
    <td>
      <NodeRow>
        {n.root ? <Guide kind="first" /> : <Guide kind="pass" />}
        {!n.root && (n.k ? <><Guide kind="pass" /><Guide kind={n.end ? 'end' : 'tee'} /></> : <Guide kind={n.done ? (n.end ? 'end' : 'tee') : 'minus'} />)}
        <Slot><Icon n={n.done ? 'check' : 'bang'} s={19} /></Slot>
        <Icon n={n.k ?? 'folder'} s={18} />
        <Label $hot={n.hot}>{n.t}</Label>
      </NodeRow>
    </td>
    <MarkCell>{n.hot && <Icon n="chip" s={18} />}</MarkCell>
    <MarkCell>{n.k && <Icon n="check" s={18} />}</MarkCell>
    <ToolCell><Label $hot={n.hot}>{n.tool}</Label></ToolCell>
  </tr>
);

const VScroll = styled.div`
  display: flex; flex-direction: column; background: #f1f1f1; border-top: 20px solid #e6e6e6;
  button { height: 20px; display: grid; place-items: center; color: #444; }
`;
const VTrack = styled.div`flex: 1; display: flex; flex-direction: column; &::before { content: ''; flex: 112; } &::after { content: ''; flex: 173; }`;
const VThumb = styled.div`flex: 377; width: 17px; background: #cdcdcd;`;
const HScroll = styled.div`
  grid-column: 1 / 3; display: flex; align-items: center; background: #f1f1f1; padding-right: 20px;
  button { width: 18px; height: 20px; display: grid; place-items: center; color: #333; }
`;
const HTrack = styled.div`flex: 1; display: flex; height: 18px; &::after { content: ''; flex: 246; }`;
const HThumb = styled.div`flex: 156; background: #cdcdcd;`;
const Splitter = styled.div`
  height: 19px; flex: none; display: flex; align-items: center; gap: 4px; padding-bottom: 6px;
  &::before, &::after { content: ''; flex: 1; height: 1px; background: #a8a8a8; }
`;
const Handle = styled.span`width: 84px; height: 7px; background: #d4d4d4; border: 1px solid #fff; border-right-color: #888; border-bottom-color: #888;`;
const Chev = ({ d, solid }: { d: string; solid?: boolean }) => (
  <svg width="12" height="12" viewBox="0 0 12 12" aria-hidden="true"><path d={d} fill={solid ? 'currentColor' : 'none'} stroke="currentColor" strokeWidth={solid ? 1 : 2} /></svg>
);

/* ---------- resource tabs ---------- */

const TabStrip = styled.nav`
  width: 35px; flex: none; display: flex; flex-direction: column; align-items: flex-start; gap: 2px; background: #a9a9a9; border-left: 1px solid #ccc;
`;
const GearButton = styled.button`width: 34px; height: 32px; margin-bottom: 17px; flex: none; display: grid; place-items: center;`;
const Tab = styled.button<{ $on?: boolean; $gap?: boolean }>`
  flex: none; width: 30px; height: 46px; display: grid; place-items: center; background: linear-gradient(90deg, #eee, #dadada);
  border: solid #7a7a7a; border-width: 1px 2px 2px 0; border-radius: 0 5px 5px 0; margin-top: ${p => (p.$gap ? 14 : 0)}px;
  ${p => p.$on && css`width: 32px; background: #f4f4f4;`}
`;
const TabNav = styled.div`margin: 8px 0 0 7px; display: flex; flex-direction: column; gap: 1px;`;
const TabNavButton = styled.button<{ $off?: boolean }>`
  width: 17px; height: 18px; display: grid; place-items: center; background: #e8e8e8; border: 1px solid #fff; border-right-color: #777; border-bottom-color: #777; color: ${p => (p.$off ? '#aaa' : '#333')};
`;

const StatusBar = styled.footer`
  height: 25px; flex: none; display: flex; align-items: center; background: linear-gradient(#e0e0e0, #d8d8d8); border-top: 1px solid #f4f4f4;
`;
const Field = styled.span<{ $f?: number; $w?: number }>`
  ${p => (p.$w ? css`flex: none; width: ${p.$w}px;` : css`flex: ${p.$f ?? 1};`)}
  height: 23px; border-right: 1px solid #bbb; box-shadow: 1px 0 #f4f4f4; display: flex; align-items: center; padding-left: 4px;
`;
const BottomRow = styled(Row)`height: 40px; flex: none; background: linear-gradient(#e2e2e2, #d2d2d2);`;

export default function App() {
  return (
    <Page>
      <Global />
      <LeftBackdrop />
      <Window>
        <TitleBar>
          <Icon n="nx" s={20} />
          <AppTitle>NX 10.0.3.5 - 加工 - [6.27.prt （修改的） ]</AppTitle>
          <Brand>SIEMENS</Brand>
          <CaptionButton aria-label="最小化"><svg width="14" height="14"><path d="M2 10h7v3h-7z" fill="#fff" /></svg></CaptionButton>
          <CaptionButton aria-label="最大化"><svg width="14" height="14"><path d="M1 2h12v11h-12zM1 4h12" fill="none" stroke="#fff" strokeWidth="2" /></svg></CaptionButton>
          <CaptionButton aria-label="关闭"><svg width="14" height="14"><path d="M1 1l12 12M13 1l-12 12" stroke="#fff" strokeWidth="2.4" /></svg></CaptionButton>
        </TitleBar>

        <MenuBar>
          <Grip />
          <Tool $w={24} aria-label="加工"><Icon n="tool1" s={18} /></Tool>
          {menus.map(([t, k, w]) => <Menu key={t} $w={w}>{t}{k && <>(<u>{k}</u>)</>}</Menu>)}
          <Spacer />
          <MdiButton aria-label="最小化窗口"><svg width="12" height="12"><path d="M2 9h8v2h-8z" fill="#666" /></svg></MdiButton>
          <MdiButton aria-label="还原窗口"><svg width="12" height="12"><path d="M4 4v-3h7v7h-2M1 5h7v6h-7z" fill="none" stroke="#666" strokeWidth="2" /></svg></MdiButton>
          <MdiButton aria-label="关闭窗口"><svg width="12" height="12"><path d="M2 2l8 8M10 2l-8 8" stroke="#666" strokeWidth="3" /></svg></MdiButton>
        </MenuBar>

        <Toolbars>
          <Row><Bar list={row1a} /><Bar list={row1b} /><Bar list={row1c} /><Bar list={[['inch', 34], ['note', 35], ['calc', 35], ['V', 16]]} ml={12} /></Row>
          <Row><Bar list={row2a} /><Bar list={row2b} ml={3} /><Bar list={row2c} ml={3} /></Row>
          <Row><Bar list={row3a} /><Bar list={row3b} /></Row>
        </Toolbars>

        <SelectionBar>
          <Drop $w={131}><select aria-label="选择过滤器"><option>无选择过滤器</option></select></Drop>
          <Drop $w={136}><select aria-label="选择范围"><option>整个装配</option></select></Drop>
          <Mini $w={18} $off><Icon n="gcube" s={19} /></Mini><Sep $w={14} />
          <Mini $w={18} $off><Icon n="filt" s={18} /></Mini><Mini $w={27}><Icon n="redfilt" s={19} /></Mini>
          <CaretButton $w={14} aria-label="过滤器选项"><Tri /></CaretButton>
          <Mini $w={24} $off><Icon n="mv" s={18} /></Mini><Mini $w={28} $off><Icon n="arm" s={18} /></Mini><Sep $w={8} />
          <Mini $w={22}><Icon n="hexdot" s={18} /></Mini><Mini $w={31}><Icon n="dash" s={20} /></Mini>
          <CaretButton $w={12} aria-label="框选选项"><Tri /></CaretButton><Sep $w={6} />
          <Mini $w={26}><Icon n="soft" s={19} /></Mini><Mini $w={26}><Icon n="bluecube" s={20} /></Mini>
          <Spacer />
          <CaretButton $w={10} aria-label="选择条选项"><Tri /></CaretButton>
        </SelectionBar>

        <Work>
          <Viewport>
            <Scene width="100%" height="100%" viewBox="161 213 1044 800" preserveAspectRatio="xMinYMin slice" role="img" aria-label="模板零件">
              <Defs />
              <Model />
              <TriadAndLines />
            </Scene>
            <LogoCard><QLogo /><LogoName>千言教育</LogoName><LogoSub>QIANYAN EDUCATION</LogoSub></LogoCard>
            <Verse $x={350} $b={42}>没有激流则谈不上勇进,</Verse>
            <Verse $x={580} $b={6}>没有山峰则谈不上攀登。</Verse>
          </Viewport>

          <SideBar>
            <Grip $row />
            {['gNote', 'gTool', 'gGeo', 'gMethod', 'gOp'].map(n => <SideTool key={n} aria-label={n}><Icon n={n} /></SideTool>)}
            <SideArrow $h={12} aria-label="折叠"><Tri $dir="left" /></SideArrow>
            <Rule /><Grip $row />
            {['hNote', 'hTool', 'hGeo', 'hMethod', 'expand'].map((n, i) => <SideTool key={n} $on={i === 0} aria-label={n}><Icon n={n} /></SideTool>)}
            <SideArrow $h={24} aria-label="更多工具"><Tri $dir="left" /><svg width="8" height="11"><path d="M1 1l3 3l3-3M1 6l3 3l3-3" fill="none" stroke="#111" strokeWidth="2" /></svg></SideArrow>
            <Rule /><Grip $row />
            {['dOp', 'dZigW', 'dZigX', 'dZigR', 'dZigB', 'dChk', 'vbox', 'dChk2', 'dChk3'].map(n => <SideTool key={n} $off={n !== 'vbox'} aria-label={n}><Icon n={n} /></SideTool>)}
            <Rule />
            <SideTool aria-label="仿真"><Icon n="torch" /></SideTool>
            <SideArrow $h={14} aria-label="折叠"><Tri $dir="left" /></SideArrow>
          </SideBar>

          <Navigator>
            <NavTitle>工序导航器 - 程序顺序</NavTitle>
            <TreeBox>
              <Clip>
                <Tree>
                  <colgroup><Col /><Col $w={42} /><Col $w={47} /><Col $w={71} /></colgroup>
                  <thead><tr><th>名称</th><th>换刀</th><th>刀轨</th><th>刀具</th></tr></thead>
                  <tbody>{tree.map((n, i) => <TreeRow key={i} n={n} />)}</tbody>
                </Tree>
              </Clip>
              <VScroll>
                <button aria-label="向上"><Chev d="M2 8l4-4l4 4" /></button>
                <VTrack><VThumb /></VTrack>
                <button aria-label="向下"><Chev d="M2 4l4 4l4-4" /></button>
              </VScroll>
              <HScroll>
                <button aria-label="向左"><Chev d="M8 2l-4 4l4 4" /></button>
                <HTrack><HThumb /></HTrack>
                <button aria-label="向右"><Chev d="M4 2l4 4l-4 4" /></button>
              </HScroll>
            </TreeBox>
            <Splitter><Handle /></Splitter>
          </Navigator>

          <TabStrip>
            <GearButton aria-label="设置"><Icon n="gear" s={18} /></GearButton>
            {['rAsm', 'rCon', 'rPart', 'rOp', 'rMach', 'rRobot', 'rBooks', 'rInfo', 'rDoc', 'rClock', 'rColor', 'rWand', 'rTools'].map(n => (
              <Tab key={n} $on={n === 'rOp'} $gap={n === 'rInfo' || n === 'rDoc' || n === 'rClock'} aria-label={n}><Icon n={n} /></Tab>
            ))}
            <TabNav>
              <TabNavButton $off aria-label="最前"><Chev solid d="M2 2h8M3 9l3-4l3 4z" /></TabNavButton>
              <TabNavButton $off aria-label="上一个"><Chev solid d="M2 8l4-4l4 4z" /></TabNavButton>
              <TabNavButton aria-label="下一个"><Chev solid d="M2 5l4 3l4-3z" /></TabNavButton>
              <TabNavButton aria-label="最后"><Chev solid d="M2 3l4 3l4-3zM2 10h8" /></TabNavButton>
            </TabNav>
          </TabStrip>
        </Work>

        <BottomRow><Bar list={bottom} /></BottomRow>
        <StatusBar>
          <Field $f={748} /><Field $f={747} /><Field $w={23} />
          <Field $w={64}><Icon n="frame" s={18} /></Field><Field $w={20} />
        </StatusBar>
      </Window>
      <RightBackdrop />
    </Page>
  );
}
